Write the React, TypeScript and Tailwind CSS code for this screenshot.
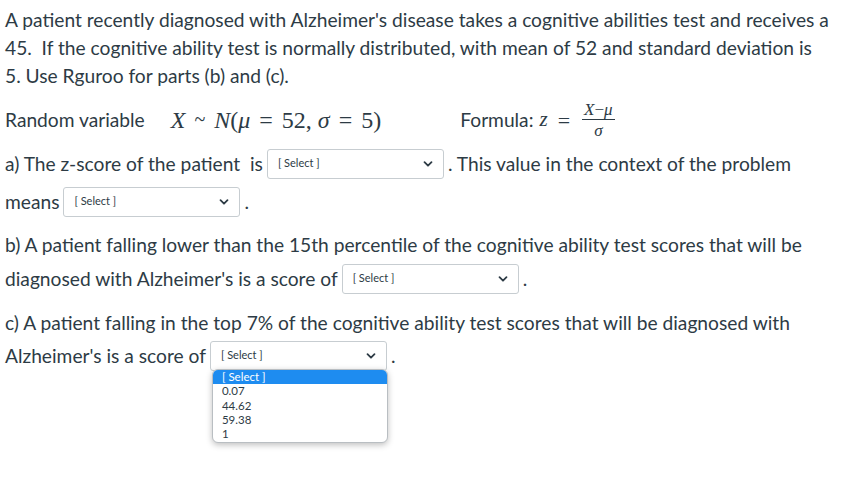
import React from 'react';

// Petit chevron du select
const Chevron = () => (
  <svg width="10" height="10" viewBox="0 0 10 10" className="text-[#2d3b45]">
    <path d="M1.5 3.2 L5 6.7 L8.5 3.2" fill="none" stroke="currentColor" strokeWidth="1.8" strokeLinecap="round" strokeLinejoin="round" />
  </svg>
);

const SelectBox: React.FC<{ className?: string; children?: React.ReactNode }> = ({ className = '', children }) => (
  <span className={`relative mx-[4px] inline-flex h-[30px] w-[177px] items-center justify-between rounded-[3px] border border-[#c7cdd1] bg-white pl-[10px] pr-[10px] align-middle ${className}`}>
    <span className="-mt-[4px] text-[11px] leading-none text-[#2d3b45]">[ Select ]</span>
    <Chevron />
    {children}
  </span>
);

const serif = "font-['Liberation_Serif',serif]";
const math = `${serif} italic`;

const App: React.FC = () => {
  return (
    <div className="min-h-[480px] w-[842px] bg-white px-[5px] pt-[6px] font-['Lato',sans-serif] text-[19.2px] text-[#2d3b45]">
      {/* Énoncé */}
      <div className="leading-[28px]">
        <div>A patient recently diagnosed with Alzheimer's disease takes a cognitive abilities test and receives a</div>
        <div>45.&nbsp; If the cognitive ability test is normally distributed, with mean of 52 and standard deviation is</div>
        <div>5. Use Rguroo for parts (b) and (c).</div>
      </div>

      {/* Variable aléatoire et formule */}
      <div className="mt-[10px] flex h-[40px] items-center">
        <span>Random variable</span>
        <span className={`ml-[26px] flex items-baseline text-[24px] ${serif}`}>
          <span className="italic">X</span>
          <span className="mx-[9px] -translate-y-[2px] text-[20px]">~</span>
          <span className="italic">N</span>
          <span>(</span>
          <span className="italic">μ</span>
          <span className="mx-[9px]">=</span>
          <span>52,</span>
          <span className="ml-[6px] italic">σ</span>
          <span className="mx-[9px]">=</span>
          <span>5)</span>
        </span>
        <span className="ml-[79px]">Formula:</span>
        <span className={`ml-[6px] text-[21px] ${math}`}>z</span>
        <span className={`ml-[10px] text-[22px] ${serif}`}>=</span>
        <span className={`ml-[12px] inline-flex flex-col items-center text-[17px] leading-[17px] ${serif}`}>
          <span className="border-b border-[#2d3b45] px-[2px] pb-[1px]">
            <span className="italic">X</span>−<span className="italic">μ</span>
          </span>
          <span className="pt-[2px] italic">σ</span>
        </span>
      </div>

      {/* Partie a */}
      <div className="mt-[8px] flex h-[32px] items-center whitespace-pre">
        <span>a) The z-score of the patient  is</span>
        <SelectBox />
        <span>. This value in the context of the problem</span>
      </div>
      <div className="mt-[6px] flex h-[32px] items-center">
        <span>means</span>
        <SelectBox />
        <span>.</span>
      </div>

      {/* Partie b */}
      <div className="mt-[13px] flex h-[28px] items-center">
        b) A patient falling lower than the 15th percentile of the cognitive ability test scores that will be
      </div>
      <div className="mt-[4px] flex h-[32px] items-center">
        <span>diagnosed with Alzheimer's is a score of</span>
        <SelectBox />
        <span>.</span>
      </div>

      {/* Partie c */}
      <div className="mt-[14px] flex h-[28px] items-center">
        c) A patient falling in the top 7% of the cognitive ability test scores that will be diagnosed with
      </div>
      <div className="mt-[3px] flex h-[32px] items-center">
        <span>Alzheimer's is a score of</span>
        <SelectBox>
          {/* Liste ouverte */}
          <div className="absolute left-[1px] top-[27px] z-10 w-[176px] overflow-hidden rounded-[6px] border border-[#b9bec2] bg-white pb-[1px] text-[11.5px] leading-[14.3px] shadow-[0_2px_6px_rgba(0,0,0,0.25)]">
            <div className="bg-[#1e8cf0] px-[9px] text-white">[ Select ]</div>
            <div className="px-[9px]">0.07</div>
            <div className="px-[9px]">44.62</div>
            <div className="px-[9px]">59.38</div>
            <div className="px-[9px]">1</div>
          </div>
        </SelectBox>
        <span>.</span>
      </div>
    </div>
  );
};

export default App;
